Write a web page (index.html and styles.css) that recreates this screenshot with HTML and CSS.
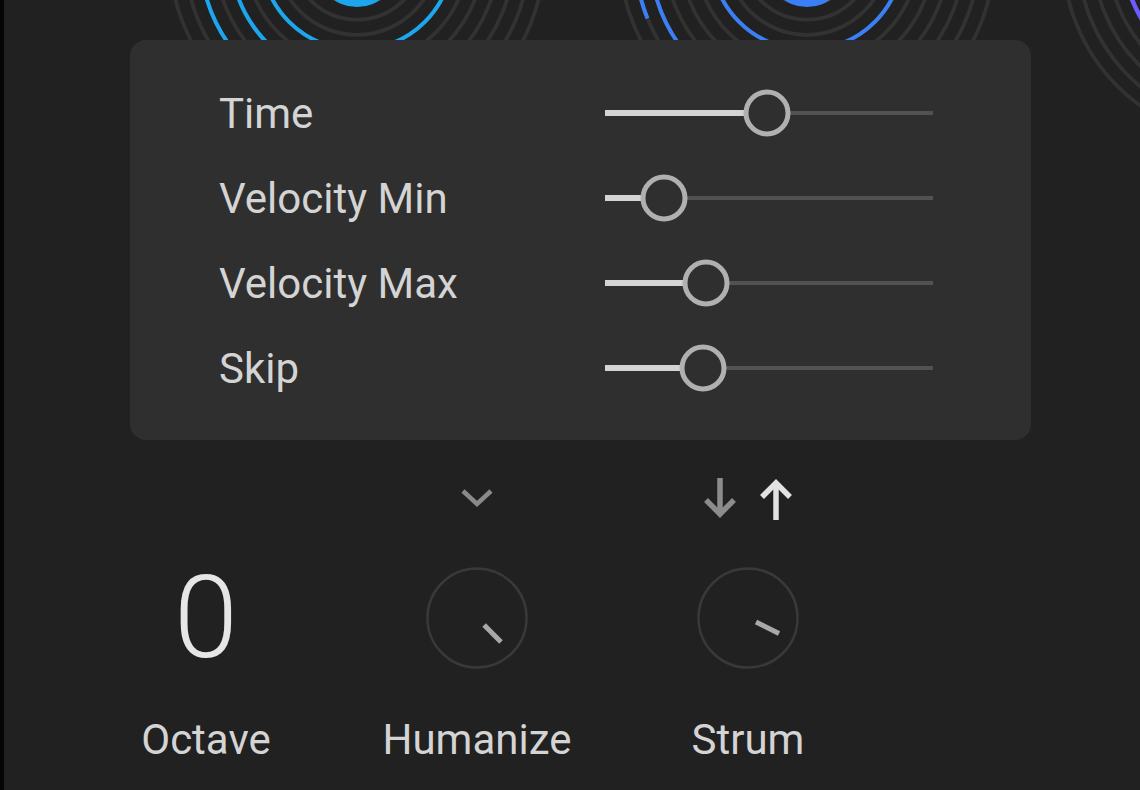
FILE: index.html
```html
<!DOCTYPE html>
<html>
<head>
<meta charset="utf-8">
<link rel="stylesheet" href="styles.css">
</head>
<body>
<div class="app">
  <svg class="decor" width="1140" height="130" viewBox="0 0 1140 130">
    <defs>
      <g id="rings" fill="none" stroke="#323232" stroke-width="3.8">
        <circle r="50.4"/><circle r="65.6"/><circle r="80.8"/><circle r="96"/>
        <circle r="111.2"/><circle r="126.4"/><circle r="141.6"/><circle r="156.8"/>
        <circle r="172"/><circle r="187.2"/>
      </g>
    </defs>
    <g transform="translate(357,-46)">
      <use href="#rings"/>
      <circle cy="12" r="41" fill="#1ba6ee"/>
      <g fill="none" stroke="#1ba6ee" stroke-width="4">
        <circle r="96"/>
        <path d="M -53.4 114.6 A 126.4 126.4 0 0 1 -125.9 11.0"/>
        <path d="M -66.3 142.1 A 156.8 156.8 0 0 1 -156.2 13.7"/>
      </g>
    </g>
    <g transform="translate(807,-46)">
      <use href="#rings"/>
      <circle cy="12" r="41" fill="#3a80f4"/>
      <g fill="none" stroke="#3a80f4" stroke-width="4">
        <circle r="96"/>
        <path d="M -66.3 142.1 A 156.8 156.8 0 0 1 -156.2 13.7"/>
        <path d="M -159.5 64.4 A 172 172 0 0 1 -169.4 -29.9"/>
      </g>
    </g>
    <g transform="translate(1250,-46)">
      <use href="#rings"/>
      <circle r="126.4" fill="none" stroke="#6c5cff" stroke-width="4.5"/>
    </g>
  </svg>

  <section class="panel">
    <div class="row">
      <span class="row-label">Time</span>
      <svg class="slider" width="330" height="50" viewBox="0 0 330 50">
        <line class="trk-off" x1="162" y1="25" x2="328" y2="25"/>
        <line class="trk-on" x1="0" y1="25" x2="141" y2="25"/>
        <circle class="thumb" cx="162" cy="25" r="21"/>
      </svg>
    </div>
    <div class="row">
      <span class="row-label">Velocity Min</span>
      <svg class="slider" width="330" height="50" viewBox="0 0 330 50">
        <line class="trk-off" x1="59" y1="25" x2="328" y2="25"/>
        <line class="trk-on" x1="0" y1="25" x2="38" y2="25"/>
        <circle class="thumb" cx="59" cy="25" r="21"/>
      </svg>
    </div>
    <div class="row">
      <span class="row-label">Velocity Max</span>
      <svg class="slider" width="330" height="50" viewBox="0 0 330 50">
        <line class="trk-off" x1="101" y1="25" x2="328" y2="25"/>
        <line class="trk-on" x1="0" y1="25" x2="80" y2="25"/>
        <circle class="thumb" cx="101" cy="25" r="21"/>
      </svg>
    </div>
    <div class="row">
      <span class="row-label">Skip</span>
      <svg class="slider" width="330" height="50" viewBox="0 0 330 50">
        <line class="trk-off" x1="98" y1="25" x2="328" y2="25"/>
        <line class="trk-on" x1="0" y1="25" x2="77" y2="25"/>
        <circle class="thumb" cx="98" cy="25" r="21"/>
      </svg>
    </div>
  </section>

  <section class="controls">
    <div class="ctrl">
      <div class="icon-row"></div>
      <div class="knob-box"><span class="octave-value">0</span></div>
      <div class="ctrl-label">Octave</div>
    </div>
    <div class="ctrl">
      <div class="icon-row">
        <svg width="40" height="30" viewBox="0 0 40 30">
          <polyline class="chev" points="6,8 20,21 34,8"/>
        </svg>
      </div>
      <div class="knob-box">
        <svg width="102" height="102" viewBox="0 0 102 102">
          <circle class="knob-ring" cx="51" cy="51" r="49.5"/>
          <line class="knob-ind" x1="58.1" y1="58.1" x2="75" y2="75"/>
        </svg>
      </div>
      <div class="ctrl-label">Humanize</div>
    </div>
    <div class="ctrl">
      <div class="icon-row">
        <svg width="100" height="50" viewBox="0 0 100 50">
          <g class="arrow-down">
            <line x1="22" y1="5" x2="22" y2="41"/>
            <polyline points="8,27 22,41 36,27"/>
          </g>
          <g class="arrow-up">
            <line x1="78" y1="10" x2="78" y2="47"/>
            <polyline points="64,24 78,10 92,24"/>
          </g>
        </svg>
      </div>
      <div class="knob-box">
        <svg width="102" height="102" viewBox="0 0 102 102">
          <circle class="knob-ring" cx="51" cy="51" r="49.5"/>
          <line class="knob-ind" x1="59" y1="55" x2="82" y2="66.6"/>
        </svg>
      </div>
      <div class="ctrl-label">Strum</div>
    </div>
  </section>
</div>
</body>
</html>
```

FILE: styles.css
```css
html, body {
  margin: 0;
  padding: 0;
}
body {
  background: #212121;
  width: 1140px;
  height: 790px;
  overflow: hidden;
  font-family: Roboto, "Noto Sans", "Liberation Sans", sans-serif;
  color: #d4d4d4;
}
.app {
  height: 790px;
  box-sizing: border-box;
  border-left: 4px solid #050505;
  padding-top: 40px;
}
.decor {
  position: absolute;
  top: 0;
  left: 0;
  z-index: -1;
}
.panel {
  margin-left: 126px;
  width: 901px;
  height: 400px;
  box-sizing: border-box;
  padding-top: 30.5px;
  border-radius: 16px;
  background: #2f2f2f;
}
.row {
  display: flex;
  align-items: center;
  height: 85px;
}
.row-label {
  margin-left: 89px;
  width: 386px;
  font-size: 42px;
  color: #d4d4d4;
}
.slider {
  display: block;
}
.trk-on {
  stroke: #d4d4d4;
  stroke-width: 6;
}
.trk-off {
  stroke: #525252;
  stroke-width: 4;
}
.thumb {
  fill: #2f2f2f;
  stroke: #b0b0b0;
  stroke-width: 5;
}
.controls {
  display: flex;
  margin-left: 66.5px;
  padding-top: 33px;
}
.ctrl {
  width: 271px;
  display: flex;
  flex-direction: column;
  align-items: center;
}
.icon-row {
  height: 50px;
  display: flex;
  align-items: center;
  justify-content: center;
}
.icon-row svg {
  display: block;
}
.chev {
  fill: none;
  stroke: #8a8a8a;
  stroke-width: 4.5;
}
.arrow-down line, .arrow-down polyline {
  fill: none;
  stroke: #8c8c8c;
  stroke-width: 5.5;
}
.arrow-up line, .arrow-up polyline {
  fill: none;
  stroke: #e2e2e2;
  stroke-width: 5.5;
}
.knob-box {
  margin-top: 44px;
  height: 101px;
  width: 102px;
  display: flex;
  align-items: center;
  justify-content: center;
}
.knob-box svg {
  display: block;
}
.knob-ring {
  fill: none;
  stroke: #393939;
  stroke-width: 2.5;
}
.knob-ind {
  stroke: #a8a8a8;
  stroke-width: 5;
}
.octave-value {
  font-size: 115px;
  font-weight: 300;
  line-height: 101px;
  color: #e6e6e6;
}
.ctrl-label {
  margin-top: 48px;
  font-size: 42px;
  line-height: 47px;
  color: #d4d4d4;
  white-space: nowrap;
}
```
